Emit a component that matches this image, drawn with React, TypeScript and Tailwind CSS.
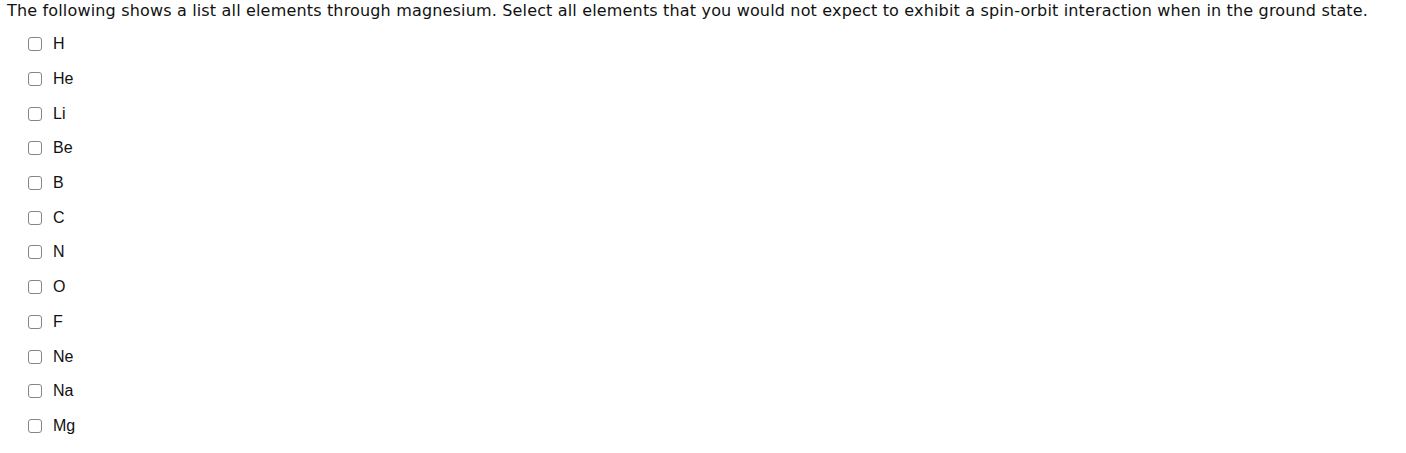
const elements = ["H", "He", "Li", "Be", "B", "C", "N", "O", "F", "Ne", "Na", "Mg"];

export default function App() {
  return (
    <div className="min-h-screen bg-white px-[7px] pt-[1px] text-[#111]">
      <p className="text-[16px] leading-[20px] tracking-[0.165px] font-['DejaVu_Sans',Verdana,sans-serif]">
        The following shows a list all elements through magnesium. Select all elements that you would not expect to exhibit a spin-orbit interaction when in the ground state.
      </p>
      <ul className="mt-[6px] flex flex-col pl-[21px]">
        {elements.map((el) => (
          <li key={el} className="flex h-[34.7px] items-center gap-[11px]">
            <span className="inline-block h-[14px] w-[14px] rounded-[3px] border border-[#858585] bg-white" />
            <span className="text-[16px] font-['Liberation_Sans',Arial,sans-serif]">{el}</span>
          </li>
        ))}
      </ul>
    </div>
  );
}
